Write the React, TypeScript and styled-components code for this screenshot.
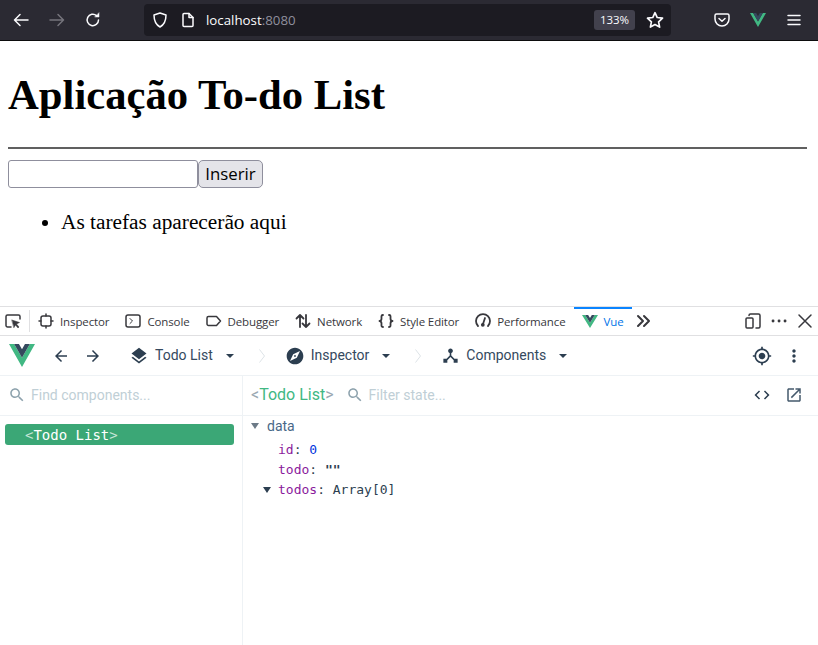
import { FC, ReactNode } from 'react';
import styled, { createGlobalStyle } from 'styled-components';

const GlobalStyle = createGlobalStyle`
  html, body {
    margin: 0;
    padding: 0;
    height: 645px;
    overflow: hidden;
    background: #fff;
  }
`;

const VueLogo: FC<{ size: number; height: number }> = ({ size, height }) => (
  <svg width={size} height={height} viewBox="0 0 256 221" preserveAspectRatio="none">
    <path fill="#41b883" d="M204.8 0H256L128 220.8 0 0h50.56L128 132.48 204.8 0z" />
    <path fill="#35495e" d="M50.56 0L128 133.12 204.8 0h-47.36L128 51.2 97.92 0H50.56z" />
  </svg>
);

const Mi: FC<{ d: string; size?: number; color?: string }> = ({ d, size = 20, color = '#2c3e50' }) => (
  <svg width={size} height={size} viewBox="0 0 24 24" fill={color}>
    <path d={d} />
  </svg>
);

const Line: FC<{ size: number; color?: string; width?: number; children: ReactNode }> = ({
  size,
  color = '#fbfbfe',
  width = 1.5,
  children,
}) => (
  <svg
    width={size}
    height={size}
    viewBox="0 0 16 16"
    fill="none"
    stroke={color}
    strokeWidth={width}
    strokeLinecap="round"
    strokeLinejoin="round"
  >
    {children}
  </svg>
);

const paths = {
  back: 'M20 11H7.83l5.59-5.59L12 4l-8 8 8 8 1.41-1.41L7.83 13H20v-2z',
  forward: 'M12 4l-1.41 1.41L16.17 11H4v2h12.17l-5.58 5.59L12 20l8-8z',
  layers:
    'M11.99 18.54l-7.37-5.73L3 14.07l9 7 9-7-1.63-1.27-7.38 5.74zM12 16l7.36-5.73L21 9l-9-7-9 7 1.63 1.27L12 16z',
  explore:
    'M12 10.9c-.61 0-1.1.49-1.1 1.1s.49 1.1 1.1 1.1c.61 0 1.1-.49 1.1-1.1s-.49-1.1-1.1-1.1zM12 2C6.48 2 2 6.48 2 12s4.48 10 10 10 10-4.48 10-10S17.52 2 12 2zm2.19 12.19L6 18l3.81-8.19L18 6l-3.81 8.19z',
  hub: 'M17 16l-4-4V8.82C14.16 8.4 15 7.3 15 6c0-1.66-1.34-3-3-3S9 4.34 9 6c0 1.3.84 2.4 2 2.82V12l-4 4H3v5h5v-3.05l4-4.2 4 4.2V21h5v-5h-4z',
  gps: 'M12 8c-2.21 0-4 1.79-4 4s1.79 4 4 4 4-1.79 4-4-1.79-4-4-4zm8.94 3c-.46-4.17-3.77-7.48-7.94-7.94V1h-2v2.06C6.83 3.52 3.52 6.83 3.06 11H1v2h2.06c.46 4.17 3.77 7.48 7.94 7.94V23h2v-2.06c4.17-.46 7.48-3.77 7.94-7.94H23v-2h-2.06zM12 19c-3.87 0-7-3.13-7-7s3.13-7 7-7 7 3.13 7 7-3.13 7-7 7z',
  more: 'M12 8c1.1 0 2-.9 2-2s-.9-2-2-2-2 .9-2 2 .9 2 2 2zm0 2c-1.1 0-2 .9-2 2s.9 2 2 2 2-.9 2-2-.9-2-2-2zm0 6c-1.1 0-2 .9-2 2s.9 2 2 2 2-.9 2-2-.9-2-2-2z',
  search:
    'M15.5 14h-.79l-.28-.27C15.41 12.59 16 11.11 16 9.5 16 5.91 13.09 3 9.5 3S3 5.91 3 9.5 5.91 16 9.5 16c1.61 0 3.09-.59 4.23-1.57l.27.28v.79l5 4.99L20.49 19l-4.99-5zm-6 0C7.01 14 5 11.99 5 9.5S7.01 5 9.5 5 14 7.01 14 9.5 11.99 14 9.5 14z',
  code: 'M9.4 16.6L4.8 12l4.6-4.6L8 6l-6 6 6 6 1.4-1.4zm5.2 0l4.6-4.6-4.6-4.6L16 6l6 6-6 6-1.4-1.4z',
  open: 'M19 19H5V5h7V3H5c-1.11 0-2 .9-2 2v14c0 1.1.89 2 2 2h14c1.1 0 2-.9 2-2v-7h-2v7zM14 3v2h3.59l-9.83 9.83 1.41 1.41L19 6.41V10h2V3h-7z',
};

const tabs: { label: string; icon: ReactNode }[] = [
  {
    label: 'Inspector',
    icon: (
      <Line size={16} color="#38383d">
        <rect x="3" y="3" width="10" height="10" rx="2" />
        <path d="M8 1v2M8 13v2M1 8h2M13 8h2" />
      </Line>
    ),
  },
  {
    label: 'Console',
    icon: (
      <Line size={16} color="#38383d">
        <rect x="1" y="2" width="14" height="12" rx="2" />
        <path d="M5 5.5L7.5 8 5 10.5" strokeWidth="1" />
      </Line>
    ),
  },
  {
    label: 'Debugger',
    icon: (
      <Line size={16} color="#38383d">
        <path d="M2.5 3.5h8l4 4.5-4 4.5h-8a1.5 1.5 0 0 1-1.5-1.5V5a1.5 1.5 0 0 1 1.5-1.5z" />
      </Line>
    ),
  },
  {
    label: 'Network',
    icon: (
      <Line size={16} color="#38383d" width={1.8}>
        <path d="M5 14V2M1.5 5.5L5 2l3.5 3.5M11 2v12M7.5 10.5L11 14l3.5-3.5" />
      </Line>
    ),
  },
  {
    label: 'Style Editor',
    icon: (
      <Line size={16} color="#38383d" width={1.8}>
        <path d="M5 2C3 2 3.5 4 3.5 5.5S3 8 1.5 8c1.5 0 2 1 2 2.5S3 14 5 14M11 2c2 0 1.5 2 1.5 3.5S13 8 14.5 8c-1.5 0-2 1-2 2.5S13 14 11 14" />
      </Line>
    ),
  },
  {
    label: 'Performance',
    icon: (
      <Line size={16} color="#38383d" width={1.8}>
        <path d="M3 13A7 7 0 1 1 13 13" />
        <path d="M10 5L8 11" />
        <circle cx="7.8" cy="11.8" r="1" fill="#38383d" />
      </Line>
    ),
  },
];

export default function App() {
  return (
    <Screen>
      <GlobalStyle />
      <BrowserBar>
        <NavButton>
          <Line size={16}>
            <path d="M15 8H1.5M7 2.5L1.5 8 7 13.5" />
          </Line>
        </NavButton>
        <NavButton>
          <Line size={16} color="#75747c">
            <path d="M1 8h13.5M9 2.5L14.5 8 9 13.5" />
          </Line>
        </NavButton>
        <NavButton>
          <Line size={16}>
            <path d="M13.5 8A5.7 5.7 0 1 1 11.5 3.6" />
            <path d="M14 1v4h-4z" fill="#fbfbfe" strokeWidth="0.5" />
          </Line>
        </NavButton>
        <UrlBar>
          <UrlIcon $width={30}>
            <Line size={16}>
              <path d="M8 1l6 2c0 5.5-1.5 9.5-6 12C3.5 12.5 2 8.5 2 3z" />
            </Line>
          </UrlIcon>
          <UrlIcon $width={26}>
            <Line size={16}>
              <path d="M3 2.5a1 1 0 0 1 1-1h5l4 4v8a1 1 0 0 1-1 1H4a1 1 0 0 1-1-1z" />
              <path d="M9 1.5v4h4" />
            </Line>
          </UrlIcon>
          <Address>
            localhost<Port>:8080</Port>
          </Address>
          <Zoom>133%</Zoom>
          <UrlIcon $width={30}>
            <Line size={18}>
              <path d="M8 1.5l2 4.3 4.7.6-3.5 3.2.9 4.7L8 12l-4.1 2.3.9-4.7L1.3 6.4 6 5.8z" />
            </Line>
          </UrlIcon>
        </UrlBar>
        <NavButton>
          <Line size={16}>
            <path d="M2.5 2h11A1.5 1.5 0 0 1 15 3.5V7a7 7 0 0 1-14 0V3.5A1.5 1.5 0 0 1 2.5 2z" />
            <path d="M5 6.5L8 9.2l3-2.7" />
          </Line>
        </NavButton>
        <NavButton>
          <VueLogo size={16} height={14} />
        </NavButton>
        <NavButton>
          <Line size={16}>
            <path d="M2 3.5h12M2 8h12M2 12.5h12" />
          </Line>
        </NavButton>
      </BrowserBar>

      <Page>
        <h1>Aplicação To-do List</h1>
        <hr />
        <TodoInput type="text" />
        <InsertButton>Inserir</InsertButton>
        <ul>
          <li>As tarefas aparecerão aqui</li>
        </ul>
      </Page>

      <TabBar>
        <PickerButton>
          <Line size={16} color="#38383d">
            <path d="M6 14H2.5A1.5 1.5 0 0 1 1 12.5v-9A1.5 1.5 0 0 1 2.5 2h11A1.5 1.5 0 0 1 15 3.5V6" />
            <path d="M7 7l7.5 2.5-3 1.5 2.5 3-1 1-2.500-3-1.500 2.500z" fill="#38383d" strokeWidth="0.5" />
          </Line>
        </PickerButton>
        {tabs.map(({ label, icon }) => (
          <Tab key={label}>
            {icon}
            {label}
          </Tab>
        ))}
        <Tab $active>
          <VueLogo size={16} height={13} />
          Vue
        </Tab>
        <Chevrons>
          <Line size={16} color="#38383d" width={2}>
            <path d="M2 3l5 5-5 5M8 3l5 5-5 5" />
          </Line>
        </Chevrons>
        <TabBarEnd>
          <Line size={16} color="#38383d">
            <rect x="1" y="5" width="7" height="10" rx="1" />
            <path d="M4 2.5A1.5 1.5 0 0 1 5.5 1h8A1.5 1.5 0 0 1 15 2.500v11a1.500 1.500 0 0 1-1.500 1.500H11" />
          </Line>
          <Line size={16} color="#38383d" width={2.8}>
            <path d="M2 8h.1M8 8h.1M14 8h.1" />
          </Line>
          <Line size={16} color="#38383d">
            <path d="M2 2l12 12M14 2L2 14" />
          </Line>
        </TabBarEnd>
      </TabBar>

      <VueBar>
        <LogoSlot>
          <VueLogo size={26} height={23} />
        </LogoSlot>
        <ArrowButton>
          <Mi d={paths.back} size={18} />
        </ArrowButton>
        <ArrowButton>
          <Mi d={paths.forward} size={18} />
        </ArrowButton>
        <Crumb $first>
          <Mi d={paths.layers} size={20} />
          <CrumbLabel>Todo List</CrumbLabel>
          <Caret />
        </Crumb>
        <Divider />
        <Crumb>
          <Mi d={paths.explore} size={20} />
          <CrumbLabel>Inspector</CrumbLabel>
          <Caret />
        </Crumb>
        <Divider />
        <Crumb>
          <Mi d={paths.hub} size={19} />
          <CrumbLabel>Components</CrumbLabel>
          <Caret />
        </Crumb>
        <VueBarEnd>
          <Mi d={paths.gps} size={20} />
          <Mi d={paths.more} size={20} />
        </VueBarEnd>
      </VueBar>

      <Panes>
        <TreePane>
          <PaneHeader>
            <Mi d={paths.search} size={18} color="#8da2ad" />
            <Placeholder>Find components...</Placeholder>
          </PaneHeader>
          <TreeRow>
            <Bracket>&lt;</Bracket>Todo List<Bracket>&gt;</Bracket>
          </TreeRow>
        </TreePane>
        <StatePane>
          <PaneHeader>
            <ComponentName>
              <Angle>&lt;</Angle>Todo List<Angle>&gt;</Angle>
            </ComponentName>
            <Mi d={paths.search} size={18} color="#8da2ad" />
            <Placeholder>Filter state...</Placeholder>
            <HeaderActions>
              <Mi d={paths.code} size={18} />
              <Mi d={paths.open} size={18} color="#44596c" />
            </HeaderActions>
          </PaneHeader>
          <StateBody>
            <SectionTitle>
              <Arrow $color="#6c7a87" />
              data
            </SectionTitle>
            <StateRow>
              <Key>id</Key>: <NumberValue>0</NumberValue>
            </StateRow>
            <StateRow>
              <Key>todo</Key>: <strong>""</strong>
            </StateRow>
            <StateRow>
              <RowArrow>
                <Arrow $color="#2c3e50" />
              </RowArrow>
              <Key>todos</Key>: Array[0]
            </StateRow>
          </StateBody>
        </StatePane>
      </Panes>
    </Screen>
  );
}

const Screen = styled.div`
  display: flex;
  flex-direction: column;
  width: 818px;
  height: 645px;
  overflow: hidden;
`;

const BrowserBar = styled.div`
  display: flex;
  align-items: center;
  flex: none;
  box-sizing: border-box;
  height: 41px;
  padding: 0 6px 1px 3px;
  background: #2b2a33;
  border-bottom: 1px solid #0c0c0d;
`;

const NavButton = styled.div`
  display: flex;
  align-items: center;
  justify-content: center;
  flex: none;
  width: 36px;
  height: 32px;
`;

const UrlBar = styled.div`
  display: flex;
  align-items: center;
  flex: 1;
  height: 32px;
  margin: 0 33px;
  padding: 0 1px;
  border-radius: 4px;
  background: #1c1b22;
`;

const UrlIcon = styled.div<{ $width: number }>`
  display: flex;
  align-items: center;
  justify-content: center;
  flex: none;
  width: ${(p) => p.$width}px;
`;

const Address = styled.div`
  flex: 1;
  margin-left: 5px;
  font: 13.3px 'Open Sans', sans-serif;
  color: #fbfbfe;
`;

const Port = styled.span`
  color: #8f8f9d;
`;

const Zoom = styled.div`
  width: 41px;
  height: 20px;
  margin-right: 5px;
  border-radius: 3px;
  background: #42414d;
  font: 11.5px/20px 'Open Sans', sans-serif;
  text-align: center;
  color: #fbfbfe;
`;

const Page = styled.main`
  flex: none;
  box-sizing: border-box;
  height: 265px;
  padding: 0 11px 0 8px;
  overflow: hidden;
  font: 21.33px 'Liberation Serif', serif;
  color: #000;

  h1 {
    margin: 28.6px 0;
    font-size: 42.67px;
    font-weight: bold;
  }

  hr {
    margin: 10.67px 0;
    border: 0;
    border-top: 2px solid #606060;
  }

  ul {
    margin: 22.3px 0;
    padding-left: 53px;
  }
`;

const TodoInput = styled.input`
  box-sizing: border-box;
  width: 190px;
  height: 28px;
  margin: 0;
  padding: 0 3px;
  border: 1px solid #8f8f9d;
  border-radius: 3px;
  background: #fff;
  vertical-align: bottom;
`;

const InsertButton = styled.button`
  box-sizing: border-box;
  width: 65px;
  height: 28px;
  margin: 0;
  padding: 0;
  border: 1px solid #8f8f9d;
  border-radius: 5px;
  background: #e4e4e9;
  font: 16.8px 'Open Sans', sans-serif;
  color: #000;
  vertical-align: bottom;
`;

const TabBar = styled.div`
  display: flex;
  align-items: stretch;
  flex: none;
  box-sizing: border-box;
  height: 30px;
  border-top: 1px solid #e0e0e2;
  border-bottom: 1px solid #e0e0e2;
  font: 11.5px 'Open Sans', sans-serif;
  letter-spacing: -0.12px;
  color: #38383d;
`;

const PickerButton = styled.div`
  display: flex;
  align-items: center;
  flex: none;
  box-sizing: border-box;
  width: 30px;
  padding-left: 5px;
  margin: 3px 0;
  border-right: 1px solid #e0e0e2;
`;

const Tab = styled.div<{ $active?: boolean }>`
  display: flex;
  align-items: center;
  gap: 6px;
  flex: none;
  padding: 0 8px;
  box-shadow: ${(p) => (p.$active ? 'inset 0 2px 0 #0a84ff' : 'none')};
  color: ${(p) => (p.$active ? '#0074e8' : 'inherit')};
`;

const Chevrons = styled.div`
  display: flex;
  align-items: center;
  margin-left: 4px;
`;

const TabBarEnd = styled.div`
  display: flex;
  align-items: center;
  gap: 10px;
  margin-left: auto;
  padding-right: 5px;
`;

const VueBar = styled.div`
  display: flex;
  align-items: center;
  flex: none;
  box-sizing: border-box;
  height: 40px;
  border-bottom: 1px solid #eef2f5;
  font: 14px Roboto, sans-serif;
  color: #2c3e50;
`;

const LogoSlot = styled.div`
  display: flex;
  flex: none;
  width: 45px;
  padding-left: 9px;
  box-sizing: border-box;
`;

const ArrowButton = styled.div`
  display: flex;
  justify-content: center;
  flex: none;
  width: 32px;
`;

const Crumb = styled.div<{ $first?: boolean }>`
  display: flex;
  align-items: center;
  flex: none;
  gap: 6px;
  padding-left: ${(p) => (p.$first ? 20 : 0)}px;
`;

const CrumbLabel = styled.span`
  margin-top: -2px;
  color: #35495e;
`;

const Caret = styled.span`
  width: 0;
  height: 0;
  margin-left: 7px;
  border-left: 4px solid transparent;
  border-right: 4px solid transparent;
  border-top: 4px solid #2c3e50;
`;

const DividerBox = styled.svg`
  flex: none;
  width: 6px;
  height: 14px;
  margin: 0 20px 0 25px;
`;

const Divider: FC = () => (
  <DividerBox viewBox="0 0 6 14" fill="none" stroke="#dde3e7" strokeWidth="1">
    <path d="M0.5 0.5L5.5 7 0.5 13.5" />
  </DividerBox>
);

const VueBarEnd = styled.div`
  display: flex;
  align-items: center;
  gap: 12px;
  margin-left: auto;
  padding-right: 14px;
`;

const Panes = styled.div`
  display: flex;
  flex: 1;
  min-height: 0;
`;

const TreePane = styled.section`
  flex: none;
  box-sizing: border-box;
  width: 243px;
  border-right: 1px solid #eef2f5;
`;

const StatePane = styled.section`
  flex: 1;
  min-width: 0;
`;

const PaneHeader = styled.div`
  display: flex;
  align-items: center;
  gap: 5px;
  box-sizing: border-box;
  height: 40px;
  padding: 0 8px 2px;
  border-bottom: 1px solid #eef2f5;
  font: 14px Roboto, sans-serif;
`;

const Placeholder = styled.span`
  color: #c0cfd6;
`;

const TreeRow = styled.div`
  height: 21px;
  margin: 8px 8px 0 5px;
  padding-left: 20px;
  border-radius: 3px;
  background: #3ba776;
  font: 14px/23px 'DejaVu Sans Mono', monospace;
  color: #fff;
`;

const Bracket = styled.span`
  color: #c5e5d6;
`;

const ComponentName = styled.span`
  margin-right: 7px;
  font-size: 16px;
  color: #41b883;
`;

const Angle = styled.span`
  color: #9aa7b2;
`;

const HeaderActions = styled.div`
  display: flex;
  align-items: center;
  gap: 14px;
  margin-left: auto;
  padding-right: 7px;
`;

const StateBody = styled.div`
  padding: 0 0 0 8px;
  font: 13px/20px 'DejaVu Sans Mono', monospace;
  color: #2c3e50;
`;

const SectionTitle = styled.div`
  display: flex;
  align-items: center;
  gap: 8px;
  height: 20px;
  margin-bottom: 4px;
  font: 14px Roboto, sans-serif;
  color: #486887;
`;

const StateRow = styled.div`
  position: relative;
  height: 20px;
  padding-left: 27px;
  white-space: pre;
`;

const RowArrow = styled.span`
  position: absolute;
  left: 12px;
  top: 7px;
  display: flex;
`;

const Arrow = styled.span<{ $color: string }>`
  width: 0;
  height: 0;
  border-left: 4px solid transparent;
  border-right: 4px solid transparent;
  border-top: 6px solid ${(p) => p.$color};
`;

const Key = styled.span`
  color: #8a1a9c;
`;

const NumberValue = styled.span`
  color: #0033dd;
`;
